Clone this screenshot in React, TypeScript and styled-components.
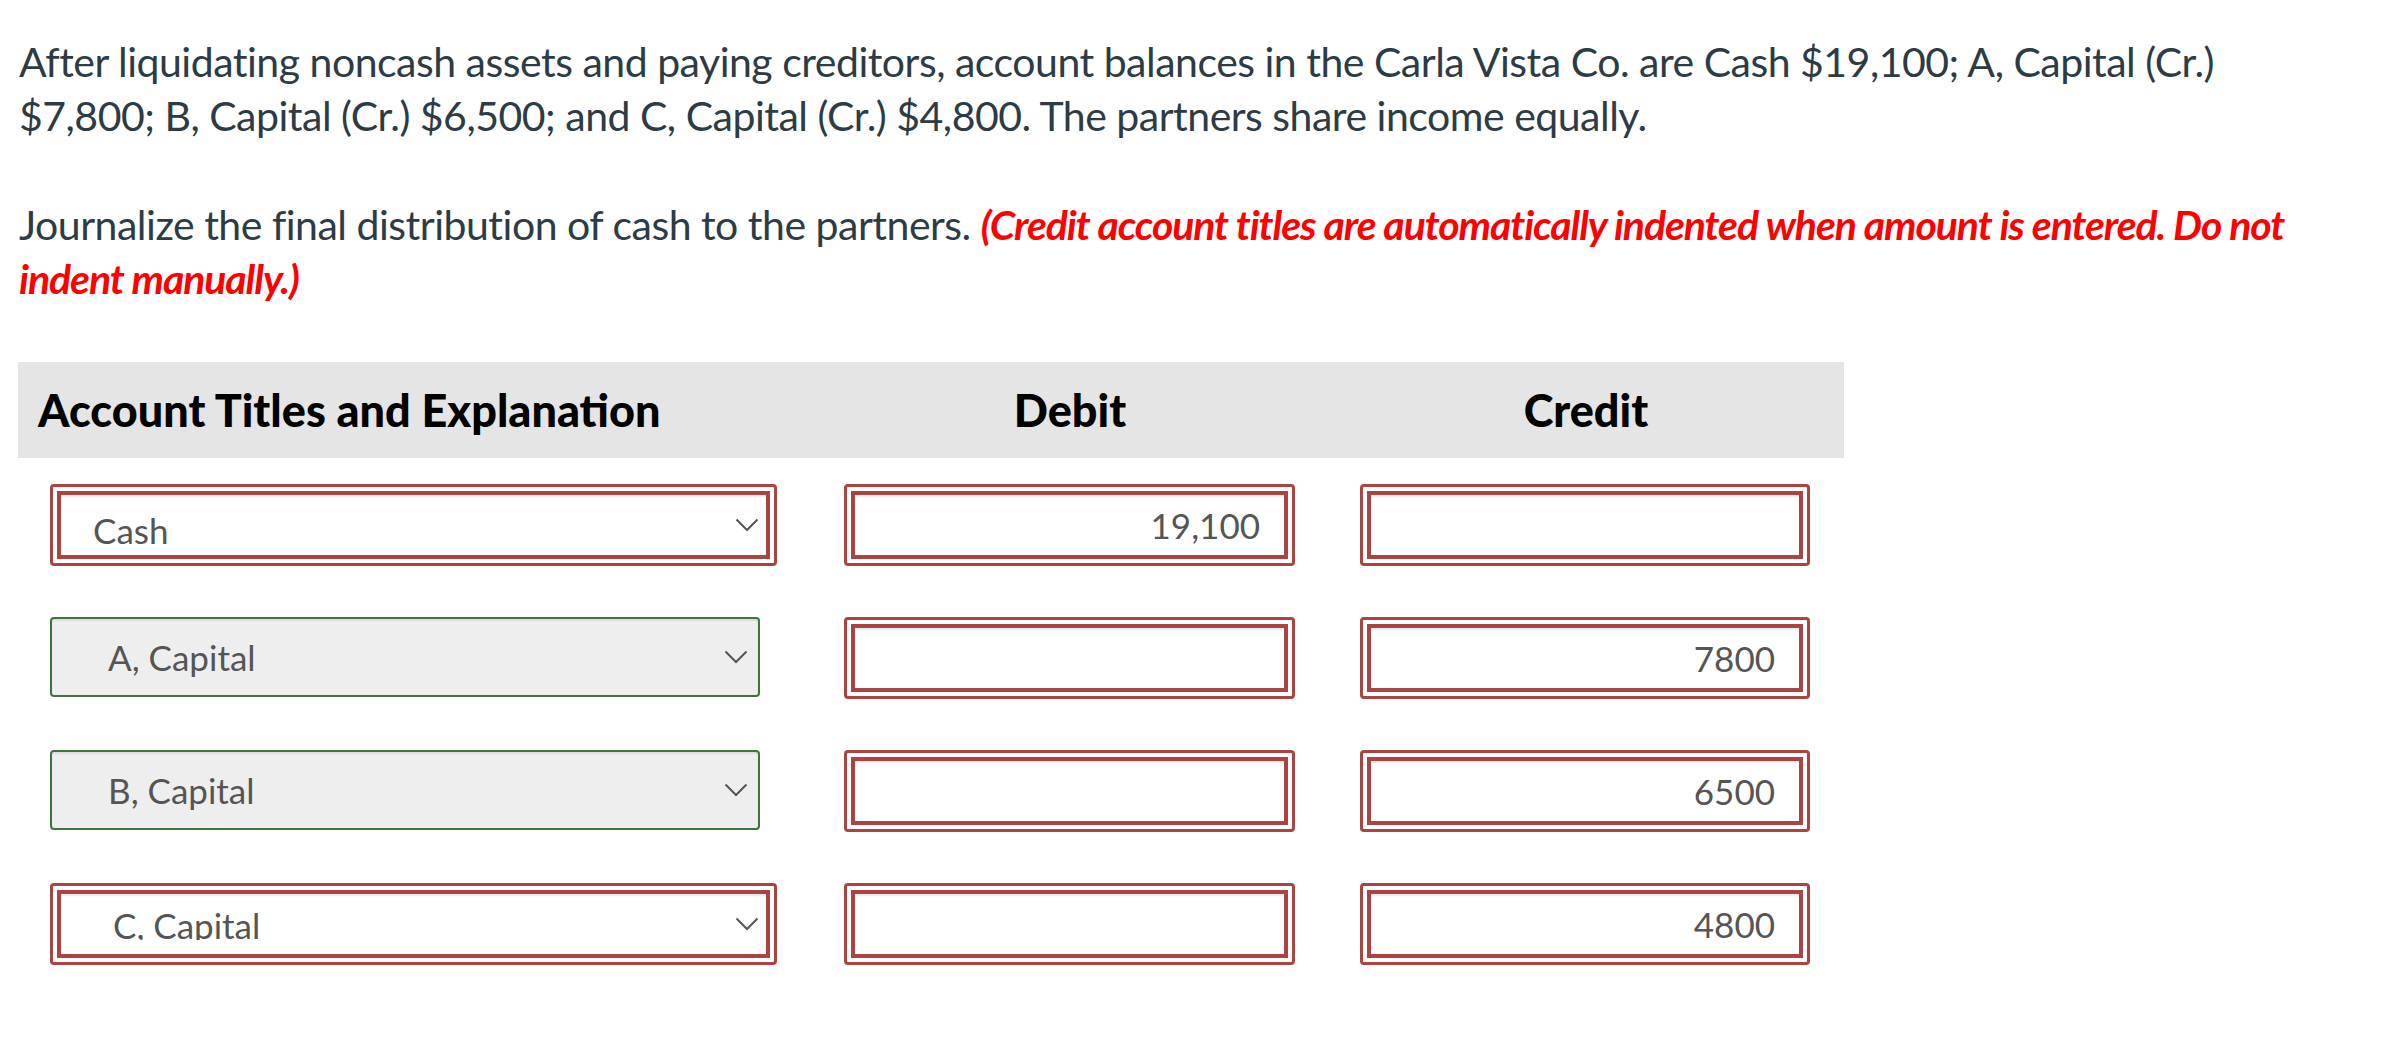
import React from "react";
import styled, { createGlobalStyle, css } from "styled-components";

const GlobalStyle = createGlobalStyle`
  html, body {
    margin: 0;
    padding: 0;
    background: #fff;
  }
`;

const Page = styled.div`
  width: 2390px;
  box-sizing: border-box;
  padding: 35px 75px 40px 19px;
  font-family: Lato, "Open Sans", sans-serif;
  color: #2d3b45;
`;

const Question = styled.p<{ $last?: boolean }>`
  margin: 0 0 ${(p) => (p.$last ? "56px" : "55px")};
  font-size: 41px;
  line-height: 54px;
  letter-spacing: -0.5px;
`;

const Instruction = styled.span`
  color: #ff0000;
  font-weight: 700;
  font-style: italic;
  letter-spacing: -1.1px;
`;

const Journal = styled.div`
  width: 1826px;
  margin-left: -1px;
  display: grid;
  grid-template-columns: 794px 516px 516px;
`;

const HeadCell = styled.div<{ $center?: boolean }>`
  height: 96px;
  background: #e5e5e5;
  display: flex;
  align-items: center;
  justify-content: ${(p) => (p.$center ? "center" : "flex-start")};
  padding-left: ${(p) => (p.$center ? "0" : "20px")};
  font-size: 45px;
  font-weight: 900;
  color: #000;
`;

const Cell = styled.div<{ $first?: boolean }>`
  padding: ${(p) => (p.$first ? "26px" : "51px")} 0 0 32px;
  display: flex;
`;

const errorRing = css`
  border: 3px solid #a94442;
  border-radius: 4px;
  padding: 4px;
  background: #fff;
`;

const Ring = styled.div<{ $width: number }>`
  ${errorRing};
  width: ${(p) => p.$width}px;
  height: 82px;
  box-sizing: border-box;
`;

const ErrorBox = styled.div<{ $select?: boolean }>`
  height: 100%;
  box-sizing: border-box;
  border: 4px solid #a94442;
  box-shadow: inset 0 2px 2px rgba(0, 0, 0, 0.09);
  display: flex;
  align-items: center;
  justify-content: ${(p) => (p.$select ? "space-between" : "flex-end")};
  padding: 0 ${(p) => (p.$select ? "7px" : "24px")} 0 0;
  color: #555;
  font-size: 35px;
`;

const GoodSelect = styled.div`
  width: 710px;
  height: 80px;
  box-sizing: border-box;
  border: 2px solid #3c763d;
  border-radius: 4px;
  background: #eeeeee;
  box-shadow: inset 0 2px 2px rgba(0, 0, 0, 0.07);
  display: flex;
  align-items: center;
  justify-content: space-between;
  padding: 0 10px 0 56px;
  color: #555;
  font-size: 35px;
`;

const Label = styled.span<{ $indent: number; $drop: number; $clip?: boolean }>`
  display: block;
  margin-left: ${(p) => p.$indent}px;
  padding-top: ${(p) => p.$drop}px;
  line-height: 40px;
  ${(p) =>
    p.$clip &&
    css`
      align-self: flex-start;
      height: 35px;
      overflow: hidden;
    `}
`;

const Amount = styled.span`
  line-height: 40px;
`;

const Chevron = () => (
  <svg width="24" height="14" viewBox="0 0 24 14" fill="none">
    <polyline points="1.5,1.5 12,12 22.5,1.5" stroke="#555" strokeWidth="2" />
  </svg>
);

type Row = {
  account: string;
  debit: string;
  credit: string;
  state: "error" | "ok";
  indent: number;
  clip?: boolean;
};

const rows: Row[] = [
  { account: "Cash", debit: "19,100", credit: "", state: "error", indent: 32 },
  { account: "A, Capital", debit: "", credit: "7800", state: "ok", indent: 0 },
  { account: "B, Capital", debit: "", credit: "6500", state: "ok", indent: 0 },
  { account: "C, Capital", debit: "", credit: "4800", state: "error", indent: 52, clip: true },
];

export default function App() {
  return (
    <Page>
      <GlobalStyle />
      <Question>
        After liquidating noncash assets and paying creditors, account balances in the Carla Vista Co. are Cash
        $19,100; A, Capital (Cr.) $7,800; B, Capital (Cr.) $6,500; and C, Capital (Cr.) $4,800. The partners share
        income equally.
      </Question>
      <Question $last>
        Journalize the final distribution of cash to the partners.{" "}
        <Instruction>
          (Credit account titles are automatically indented when amount is entered. Do not indent manually.)
        </Instruction>
      </Question>
      <Journal>
        <HeadCell>Account Titles and Explanation</HeadCell>
        <HeadCell $center>Debit</HeadCell>
        <HeadCell $center>Credit</HeadCell>
        {rows.map((row, i) => (
          <React.Fragment key={row.account}>
            <Cell $first={i === 0}>
              {row.state === "error" ? (
                <Ring $width={727}>
                  <ErrorBox $select>
                    <Label $indent={row.indent} $drop={row.clip ? 11 : 10} $clip={row.clip}>
                      {row.account}
                    </Label>
                    <Chevron />
                  </ErrorBox>
                </Ring>
              ) : (
                <GoodSelect>
                  <Label $indent={0} $drop={0}>
                    {row.account}
                  </Label>
                  <Chevron />
                </GoodSelect>
              )}
            </Cell>
            <Cell $first={i === 0}>
              <Ring $width={451}>
                <ErrorBox>
                  <Amount>{row.debit}</Amount>
                </ErrorBox>
              </Ring>
            </Cell>
            <Cell $first={i === 0}>
              <Ring $width={450}>
                <ErrorBox>
                  <Amount>{row.credit}</Amount>
                </ErrorBox>
              </Ring>
            </Cell>
          </React.Fragment>
        ))}
      </Journal>
    </Page>
  );
}
